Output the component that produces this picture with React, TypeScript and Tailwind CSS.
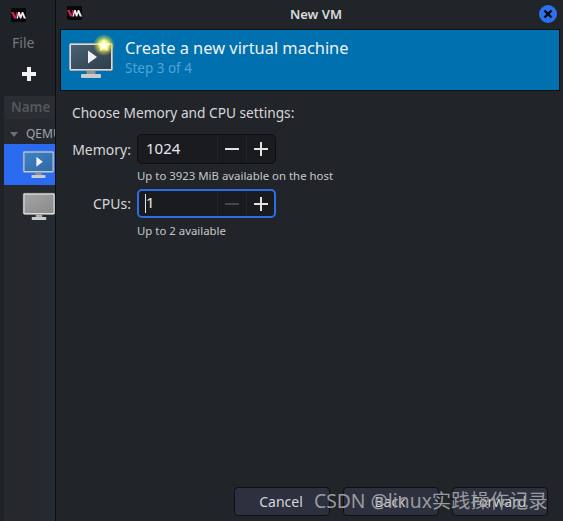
const font = { fontFamily: '"Noto Sans", "Noto Sans CJK SC", sans-serif' };

function Logo() {
  return (
    <svg width="15" height="14" viewBox="0 0 15 14" className="shrink-0">
      <rect width="15" height="14" rx="1" fill="#08080a" />
      <path d="M0 4 L2.6 4 L4.4 8 L5.6 4 L6.6 4 L5 10.5 L3.2 10.5 Z" fill="#d0204e" />
      <path d="M5.4 10.5 L7.2 4 L8.8 4 L9.8 7 L10.8 4 L12.2 4 L15 10.5 L12.8 10.5 L11.4 7 L10.3 10.5 L8.9 10.5 L7.8 7 L6.9 10.5 Z" fill="#ececec" />
    </svg>
  );
}

function Monitor({ w, h, grey, star }: { w: number; h: number; grey?: boolean; star?: boolean }) {
  return (
    <svg width={w} height={h} viewBox="0 0 44 35" preserveAspectRatio="none" className="shrink-0 overflow-visible">
      <defs>
        <linearGradient id={grey ? "sg" : star ? "sd" : "sb"} x1="0" y1="0" x2="1" y2="1">
          <stop offset="0" stopColor={grey ? "#a4a4a4" : star ? "#4a6274" : "#3d82c4"} />
          <stop offset="1" stopColor={grey ? "#8a8a8a" : star ? "#2e3d4a" : "#2f6aa8"} />
        </linearGradient>
        <radialGradient id="glow">
          <stop offset="0.4" stopColor="#f4f46a" />
          <stop offset="1" stopColor="#c8c820" stopOpacity="0" />
        </radialGradient>
      </defs>
      <rect x="0.5" y="0.5" width="43" height="27" rx="1.5" fill={grey ? "#e6e7e8" : "#d9dcdd"} stroke={grey ? "#c4c6c8" : "#a8acae"} />
      <rect x="2" y="2" width="40" height="24" fill={`url(#${grey ? "sg" : star ? "sd" : "sb"})`} />
      {!grey && <path d="M19 7.5 L28 14 L19 20.5 Z" fill="#f2f2f2" />}
      <rect x="17.5" y="28" width="9" height="3" fill={grey ? "#b0b2b4" : "#8f9396"} />
      <rect x="12" y="31" width="20" height="4" rx="1" fill="#c9cccd" />
      {star && (
        <g>
          <circle cx="35" cy="2" r="11" fill="url(#glow)" />
          <path d="M35 -4 L36.9 0.2 L41.4 0.6 L38 3.5 L39.1 8 L35 5.6 L30.9 8 L32 3.5 L28.6 0.6 L33.1 0.2 Z" fill="#fdfdf0" />
        </g>
      )}
    </svg>
  );
}

function Spin({ value, focused }: { value: string; focused?: boolean }) {
  return (
    <div
      className={`flex w-[139px] items-stretch rounded-[5px] bg-[#191b1f] ${
        focused ? "h-[29px] border-2 border-[#2b6ee8]" : "h-[30px] border border-[#0e0f12]"
      }`}
    >
      <div className={`relative flex flex-1 items-center text-[15px] text-[#e6e8ea] ${focused ? "pl-[7px]" : "pl-2"}`}>
        {focused && <span className="absolute left-[6px] top-[3px] h-[19px] w-px bg-[#e6e8ea]" />}
        <span className="relative -top-px">{value}</span>
      </div>
      <div className="flex w-[29px] items-center justify-center border-l border-[#22252a]">
        <span className={`h-[2px] w-[14px] ${focused ? "bg-[#43474d]" : "bg-[#e0e2e4]"}`} />
      </div>
      <div className={`relative flex items-center justify-center border-l border-[#22252a] ${focused ? "w-[28px]" : "w-[29px]"}`}>
        <span className="h-[2px] w-[14px] bg-[#e0e2e4]" />
        <span className="absolute h-[14px] w-[2px] bg-[#e0e2e4]" />
      </div>
    </div>
  );
}

function Btn({ label }: { label: string }) {
  return (
    <div className="flex h-[29px] w-[96px] items-center justify-center rounded-[4px] border border-[#0f1013] bg-[#2d303f] pr-[2px] text-[14px] text-[#d4d7da]">
      {label}
    </div>
  );
}

export default function App() {
  return (
    <div style={font} className="relative flex h-[521px] w-[563px] overflow-hidden bg-[#212429] text-[#d6d8da]">
      <aside className="flex w-[55px] shrink-0 flex-col bg-[#1f2227]">
        <div className="flex h-[29px] items-center pl-[11px]">
          <Logo />
        </div>
        <div className="flex h-[26px] items-center pl-3 text-[14px] text-[#77797c]">File</div>
        <div className="flex h-[36px] items-center pl-[22px]">
          <span className="relative top-px flex h-[14px] w-[14px] items-center justify-center">
            <span className="h-[4px] w-[14px] bg-[#f2f2f2]" />
            <span className="absolute h-[14px] w-[4px] bg-[#f2f2f2]" />
          </span>
        </div>
        <div className="ml-1 mt-[5px] flex flex-1 flex-col bg-gradient-to-r from-[#25282c] via-[#26282d] to-[#242b33]">
          <div className="flex h-[23px] shrink-0 items-center bg-[#2a2d32] pl-[7px] text-[13.5px] font-semibold text-[#55585c]">
            Name
          </div>
          <div className="ml-[6px] mt-[5px] flex h-[20px] shrink-0 items-center gap-[8px] overflow-hidden text-[12px] text-[#a2a5a8]">
            <span className="h-0 w-0 shrink-0 border-x-[4px] border-t-[5px] border-x-transparent border-t-[#6d7074]" />
            <span>QEMU</span>
          </div>
          <div className="flex h-[41px] shrink-0 items-center bg-[#2a6bf2] pl-[19px]">
            <Monitor w={31} h={27} />
          </div>
          <div className="mt-[1px] flex h-[41px] shrink-0 items-center pl-[19px]">
            <Monitor w={32} h={27} grey />
          </div>
        </div>
      </aside>

      <main className="flex flex-1 flex-col border-l border-[#0d0e10] bg-[#212429]">
        <header className="relative flex h-[29px] shrink-0 items-center justify-center pl-[13px] text-[13px] font-semibold text-[#d9dbdd]">
          <span className="absolute left-[11px] top-[6px]">
            <Logo />
          </span>
          <span>New VM</span>
          <span className="absolute right-[6px] top-[5px] flex h-[18px] w-[18px] items-center justify-center rounded-full bg-[#2b70ee]">
            <svg width="10" height="10" viewBox="0 0 10 10">
              <path d="M1.5 1.5 L8.5 8.5 M8.5 1.5 L1.5 8.5" stroke="#08090b" strokeWidth="2.4" />
            </svg>
          </span>
        </header>

        <section className="mx-[4px] mr-[3px] flex h-[62px] shrink-0 items-center gap-[12px] border border-[#0d0e10] bg-[#0070ae] pl-[8px]">
          <Monitor w={44} h={35} star />
          <div className="-mt-[5px] flex flex-col">
            <div className="text-[16.4px] leading-[22px] text-[#eef2f5]">Create a new virtual machine</div>
            <div className="text-[13.5px] leading-[19px] text-[#4fa3d8]">Step 3 of 4</div>
          </div>
        </section>

        <div className="flex flex-1 flex-col pl-[16px]">
          <p className="mt-[12px] text-[13.7px] leading-[19px] text-[#d6d8da]">Choose Memory and CPU settings:</p>

          <div className="mt-[12px] grid grid-cols-[59px_1fr] gap-x-[6px]">
            <div className="flex h-[30px] items-center justify-end text-[14px]">Memory:</div>
            <Spin value="1024" />
            <div />
            <div className="mt-[4px] h-[21px] text-[11.4px] leading-[16px] text-[#c6c8ca]">
              Up to 3923 MiB available on the host
            </div>
            <div className="flex h-[29px] items-center justify-end text-[14px]">CPUs:</div>
            <Spin value="1" focused />
            <div />
            <div className="mt-[5px] text-[11.4px] leading-[16px] text-[#c6c8ca]">Up to 2 available</div>
          </div>

          <div className="mb-[5px] mr-[15px] mt-auto flex justify-end gap-[13px]">
            <Btn label="Cancel" />
            <Btn label="Back" />
            <Btn label="Forward" />
          </div>
        </div>
      </main>

      <div className="absolute left-[314px] top-[488px] whitespace-nowrap text-[19.3px] leading-[26px] text-[#9a9b9d]">
        CSDN @linux实践操作记录
      </div>
    </div>
  );
}
